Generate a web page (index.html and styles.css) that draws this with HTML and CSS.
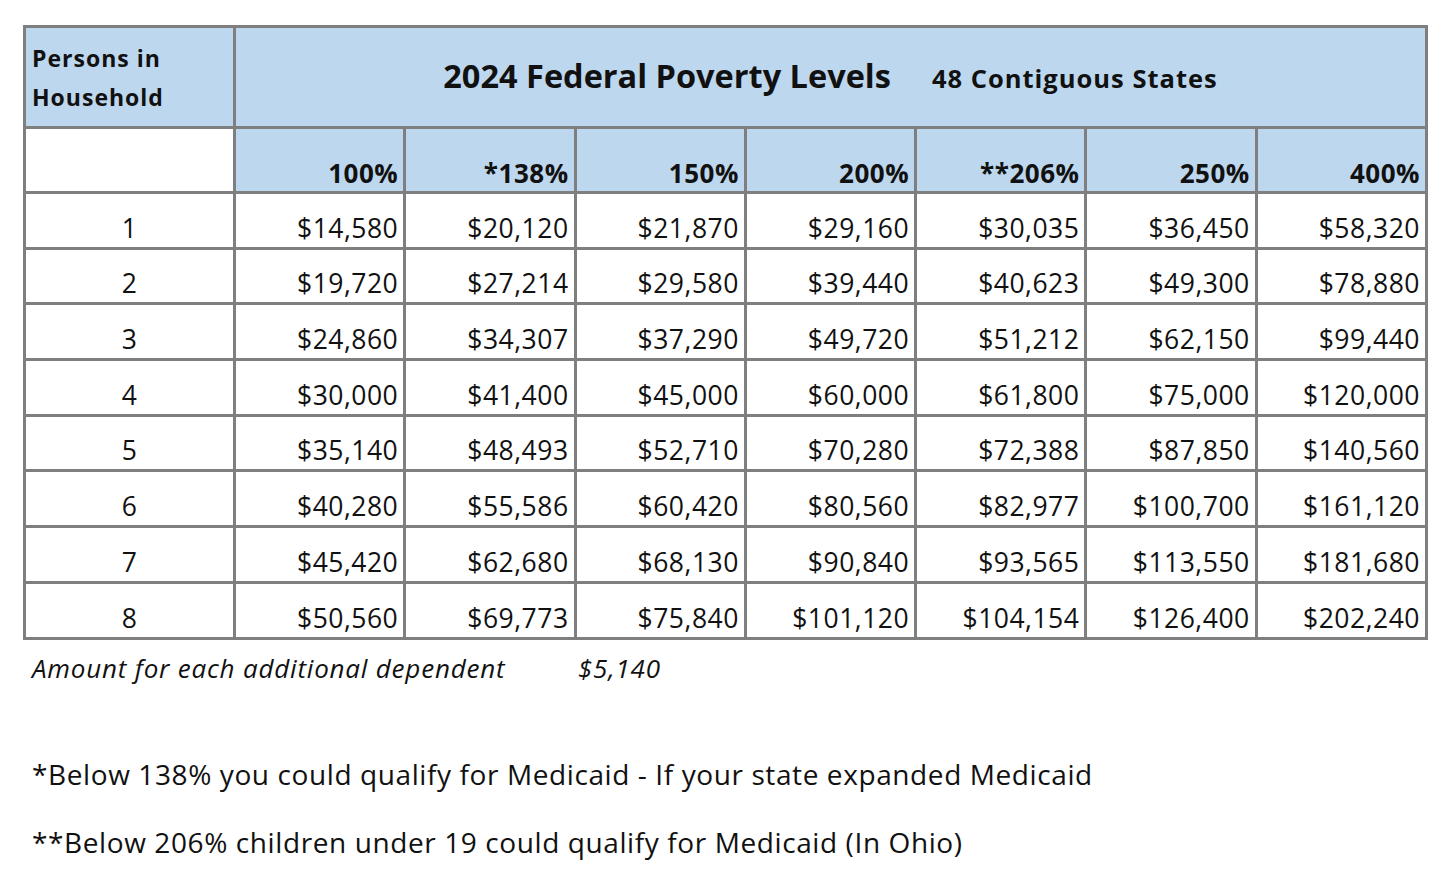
FILE: index.html
```html
<!DOCTYPE html>
<html lang="en">
<head>
<meta charset="utf-8">
<title>2024 Federal Poverty Levels</title>
<link rel="stylesheet" href="styles.css">
</head>
<body>
<div class="page">
  <div class="fpl">
    <div class="cell corner">Persons in<br>Household</div>
    <div class="cell title"><span class="main">2024 Federal Poverty Levels</span><span class="sub">48 Contiguous States</span></div>

    <div class="cell blank"></div>
    <div class="cell pct">100%</div>
    <div class="cell pct">*138%</div>
    <div class="cell pct">150%</div>
    <div class="cell pct">200%</div>
    <div class="cell pct">**206%</div>
    <div class="cell pct">250%</div>
    <div class="cell pct">400%</div>

    <div class="cell num">1</div><div class="cell val">$14,580</div><div class="cell val">$20,120</div><div class="cell val">$21,870</div><div class="cell val">$29,160</div><div class="cell val">$30,035</div><div class="cell val">$36,450</div><div class="cell val">$58,320</div>
    <div class="cell num">2</div><div class="cell val">$19,720</div><div class="cell val">$27,214</div><div class="cell val">$29,580</div><div class="cell val">$39,440</div><div class="cell val">$40,623</div><div class="cell val">$49,300</div><div class="cell val">$78,880</div>
    <div class="cell num">3</div><div class="cell val">$24,860</div><div class="cell val">$34,307</div><div class="cell val">$37,290</div><div class="cell val">$49,720</div><div class="cell val">$51,212</div><div class="cell val">$62,150</div><div class="cell val">$99,440</div>
    <div class="cell num">4</div><div class="cell val">$30,000</div><div class="cell val">$41,400</div><div class="cell val">$45,000</div><div class="cell val">$60,000</div><div class="cell val">$61,800</div><div class="cell val">$75,000</div><div class="cell val">$120,000</div>
    <div class="cell num">5</div><div class="cell val">$35,140</div><div class="cell val">$48,493</div><div class="cell val">$52,710</div><div class="cell val">$70,280</div><div class="cell val">$72,388</div><div class="cell val">$87,850</div><div class="cell val">$140,560</div>
    <div class="cell num">6</div><div class="cell val">$40,280</div><div class="cell val">$55,586</div><div class="cell val">$60,420</div><div class="cell val">$80,560</div><div class="cell val">$82,977</div><div class="cell val">$100,700</div><div class="cell val">$161,120</div>
    <div class="cell num">7</div><div class="cell val">$45,420</div><div class="cell val">$62,680</div><div class="cell val">$68,130</div><div class="cell val">$90,840</div><div class="cell val">$93,565</div><div class="cell val">$113,550</div><div class="cell val">$181,680</div>
    <div class="cell num">8</div><div class="cell val">$50,560</div><div class="cell val">$69,773</div><div class="cell val">$75,840</div><div class="cell val">$101,120</div><div class="cell val">$104,154</div><div class="cell val">$126,400</div><div class="cell val">$202,240</div>
  </div>

  <p class="extra"><span class="extra-label">Amount for each additional dependent</span><span class="extra-value">$5,140</span></p>

  <p class="note note-first">*Below 138% you could qualify for Medicaid - If your state expanded Medicaid</p>
  <p class="note">**Below 206% children under 19 could qualify for Medicaid (In Ohio)</p>
</div>
</body>
</html>
```

FILE: styles.css
```css
html, body {
  margin: 0;
  padding: 0;
  background: #ffffff;
}

body {
  font-family: "Open Sans", Lato, "Liberation Sans", sans-serif;
  color: #111111;
}

.page {
  padding: 25px 0 0 23px;
}

.fpl {
  display: grid;
  width: 1405px;
  box-sizing: border-box;
  grid-template-columns: 207px repeat(7, 1fr);
  grid-template-rows: 98px 62px;
  grid-auto-rows: 52.7px;
  gap: 3px;
  padding: 3px;
  background: #7f7f7f;
}

.cell {
  background: #ffffff;
  display: flex;
  box-sizing: border-box;
  min-width: 0;
}

.corner {
  background: #bdd7ee;
  font-weight: 700;
  font-size: 23px;
  letter-spacing: 1px;
  line-height: 39px;
  padding: 11px 0 0 6px;
  display: block;
}

.title {
  grid-column: 2 / span 7;
  background: #bdd7ee;
  font-weight: 700;
  justify-content: center;
  align-items: baseline;
  padding-top: 25px;
  gap: 41px;
}

.title .main {
  font-size: 32.5px;
}

.title .sub {
  font-size: 25.5px;
  letter-spacing: 1px;
}

.blank {
  background: #ffffff;
}

.pct {
  background: #bdd7ee;
  font-weight: 700;
  font-size: 26px;
  letter-spacing: 0.5px;
  justify-content: flex-end;
  align-items: flex-end;
  padding: 0 5px 0 0;
}

.num,
.val {
  font-size: 26.5px;
  letter-spacing: 0.5px;
  align-items: flex-end;
  padding-bottom: 1px;
}

.num {
  justify-content: center;
}

.val {
  justify-content: flex-end;
  padding-right: 5px;
}

.extra {
  margin: 10px 0 0 9px;
  font-style: italic;
  font-size: 26px;
  letter-spacing: 0.8px;
  display: flex;
}

.extra-label {
  width: 546px;
}

.note {
  margin: 0 0 0 9px;
  font-size: 28px;
  letter-spacing: 0.6px;
}

.note-first {
  margin-top: 69px;
}

.note + .note {
  margin-top: 30px;
}
```
